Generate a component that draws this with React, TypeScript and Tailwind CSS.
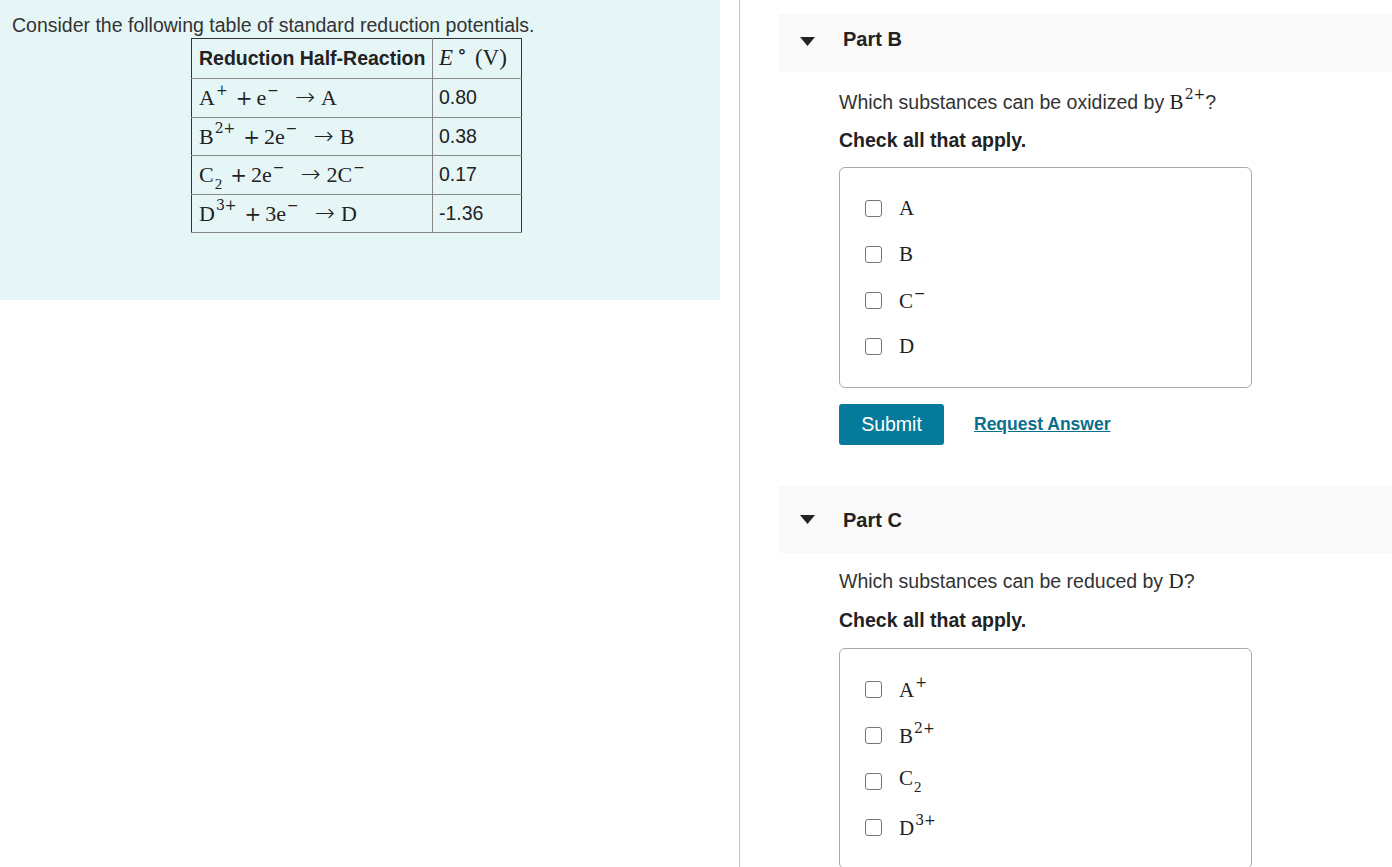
import React from "react";

const sans = "font-['Liberation_Sans',Arial,sans-serif]";
const serif = "font-['Liberation_Serif','Times_New_Roman',serif]";
const sym = "font-['DejaVu_Serif',serif]";
const arrowFont = "font-['DejaVu_Sans',sans-serif]";

function Sup({ children }: { children: React.ReactNode }) {
  return <sup className={`${sym} relative -top-[2px] ml-[1px] text-[14px] font-light leading-none align-super`}>{children}</sup>;
}

function Sub({ children }: { children: React.ReactNode }) {
  return <sub className={`${serif} relative top-[1px] ml-[1px] text-[15px] leading-none align-sub`}>{children}</sub>;
}

function Plus() {
  return <span className={`${sym} ml-[8px] mr-[4px] text-[20px]`}>+</span>;
}

function Arrow() {
  return <span className={`${arrowFont} ml-[16px] mr-[6px] text-[24px] leading-none font-light`}>→</span>;
}

const rows: { eq: React.ReactNode; e: string }[] = [
  {
    eq: (
      <>
        A<Sup>+</Sup>
        <Plus />e<Sup>−</Sup>
        <Arrow />A
      </>
    ),
    e: "0.80",
  },
  {
    eq: (
      <>
        B<Sup>2+</Sup>
        <Plus />2e<Sup>−</Sup>
        <Arrow />B
      </>
    ),
    e: "0.38",
  },
  {
    eq: (
      <>
        C<Sub>2</Sub>
        <Plus />2e<Sup>−</Sup>
        <Arrow />2C<Sup>−</Sup>
      </>
    ),
    e: "0.17",
  },
  {
    eq: (
      <>
        D<Sup>3+</Sup>
        <Plus />3e<Sup>−</Sup>
        <Arrow />D
      </>
    ),
    e: "-1.36",
  },
];

function Checkbox() {
  return <span className="block h-[17px] w-[17px] rounded-[3px] border-[1.5px] border-[#767676] bg-white" />;
}

function Options({ items }: { items: React.ReactNode[] }) {
  return (
    <div className="w-[413px] rounded-[6px] border border-[#aaaaaa] bg-white pt-[28px] pb-[29px] pl-[25px]">
      <div className="flex flex-col gap-[22px]">
        {items.map((it, i) => (
          <div key={i} className="flex h-[24px] items-center gap-[17px]">
            <Checkbox />
            <span className={`${serif} text-[21px] leading-none text-[#222]`}>{it}</span>
          </div>
        ))}
      </div>
    </div>
  );
}

function Triangle() {
  return (
    <svg width="15" height="9" viewBox="0 0 15 9" className="block">
      <path d="M0 0 H15 L7.5 9 Z" fill="#222" />
    </svg>
  );
}

export default function App() {
  return (
    <div className={`${sans} flex min-h-[867px] w-[1392px] bg-white text-[#333]`}>
      {/* Left: problem statement */}
      <div className="w-[720px] shrink-0">
        <div className="h-[300px] bg-[#e6f6f7] pl-[12px] pt-[13px]">
          <p className="text-[19.5px] leading-[24px] text-[#333]">Consider the following table of standard reduction potentials.</p>
          <table className="ml-[179px] mt-[1px] w-[330px] table-fixed border-collapse border border-[#333] text-[#222]">
            <colgroup>
              <col className="w-[241px]" />
              <col className="w-[89px]" />
            </colgroup>
            <thead>
              <tr className="h-[40px]">
                <th className="whitespace-nowrap border border-[#888] border-l-[#333] border-t-[#333] pl-[7px] pr-0 text-left text-[19.5px] font-bold">
                  Reduction Half-Reaction
                </th>
                <th className={`${serif} whitespace-nowrap border border-[#888] border-r-[#333] border-t-[#333] px-[6px] text-left text-[23px] font-normal`}>
                  <i>E</i>
                  <span className={`${sym} relative -top-[7px] ml-[4px] mr-[8px] text-[20px] font-light leading-none`}>∘</span>(V)
                </th>
              </tr>
            </thead>
            <tbody>
              {rows.map((r, i) => (
                <tr key={i} className="h-[38.5px]">
                  <td className={`${serif} whitespace-nowrap border border-[#888] border-l-[#333] px-[7px] text-[22px]`}>{r.eq}</td>
                  <td className="border border-[#888] border-r-[#333] px-[6px] text-[19.5px]">{r.e}</td>
                </tr>
              ))}
            </tbody>
          </table>
        </div>
      </div>

      {/* divider */}
      <div className="ml-[19px] w-px shrink-0 bg-[#bcc1c6]" />

      {/* Right: parts */}
      <div className="flex-1 pl-[39px] pt-[14px]">
        {/* Part B */}
        <div className="flex h-[58px] items-start gap-[28px] bg-[#f9f9f9] pl-[21px] pt-[13px]">
          <span className="mt-[10px]">
            <Triangle />
          </span>
          <span className="text-[20px] font-bold leading-[24px] text-[#222]">Part B</span>
        </div>
        <div className="pl-[60px]">
          <p className="mt-[17px] text-[19.5px] leading-[24px] text-[#333]">
            Which substances can be oxidized by{" "}
            <span className={`${serif} text-[21px] leading-none text-[#222]`}>
              B<Sup>2+</Sup>
            </span>
            ?
          </p>
          <p className="mt-[14px] text-[19.5px] font-bold leading-[24px] text-[#222]">Check all that apply.</p>
          <div className="mt-[15px]">
            <Options
              items={[
                "A",
                "B",
                <>
                  C<Sup>−</Sup>
                </>,
                "D",
              ]}
            />
          </div>
          <div className="mt-[16px] flex items-center gap-[30px]">
            <button className="h-[41px] w-[105px] rounded-[3px] bg-[#057a9b] text-[19.5px] text-white">Submit</button>
            <a className="text-[17.5px] font-bold text-[#0a6f8e] underline" href="#">
              Request Answer
            </a>
          </div>
        </div>

        {/* Part C */}
        <div className="mt-[41px] flex h-[67px] items-center gap-[28px] bg-[#f9f9f9] pl-[21px]">
          <Triangle />
          <span className="text-[20px] font-bold leading-[24px] text-[#222]">Part C</span>
        </div>
        <div className="pl-[60px]">
          <p className="mt-[16px] text-[19.5px] leading-[24px] text-[#333]">
            Which substances can be reduced by <span className={`${serif} text-[21px] leading-none text-[#222]`}>D</span>?
          </p>
          <p className="mt-[15px] text-[19.5px] font-bold leading-[24px] text-[#222]">Check all that apply.</p>
          <div className="mt-[16px]">
            <Options
              items={[
                <>
                  A<Sup>+</Sup>
                </>,
                <>
                  B<Sup>2+</Sup>
                </>,
                <>
                  C<Sub>2</Sub>
                </>,
                <>
                  D<Sup>3+</Sup>
                </>,
              ]}
            />
          </div>
        </div>
      </div>
    </div>
  );
}
